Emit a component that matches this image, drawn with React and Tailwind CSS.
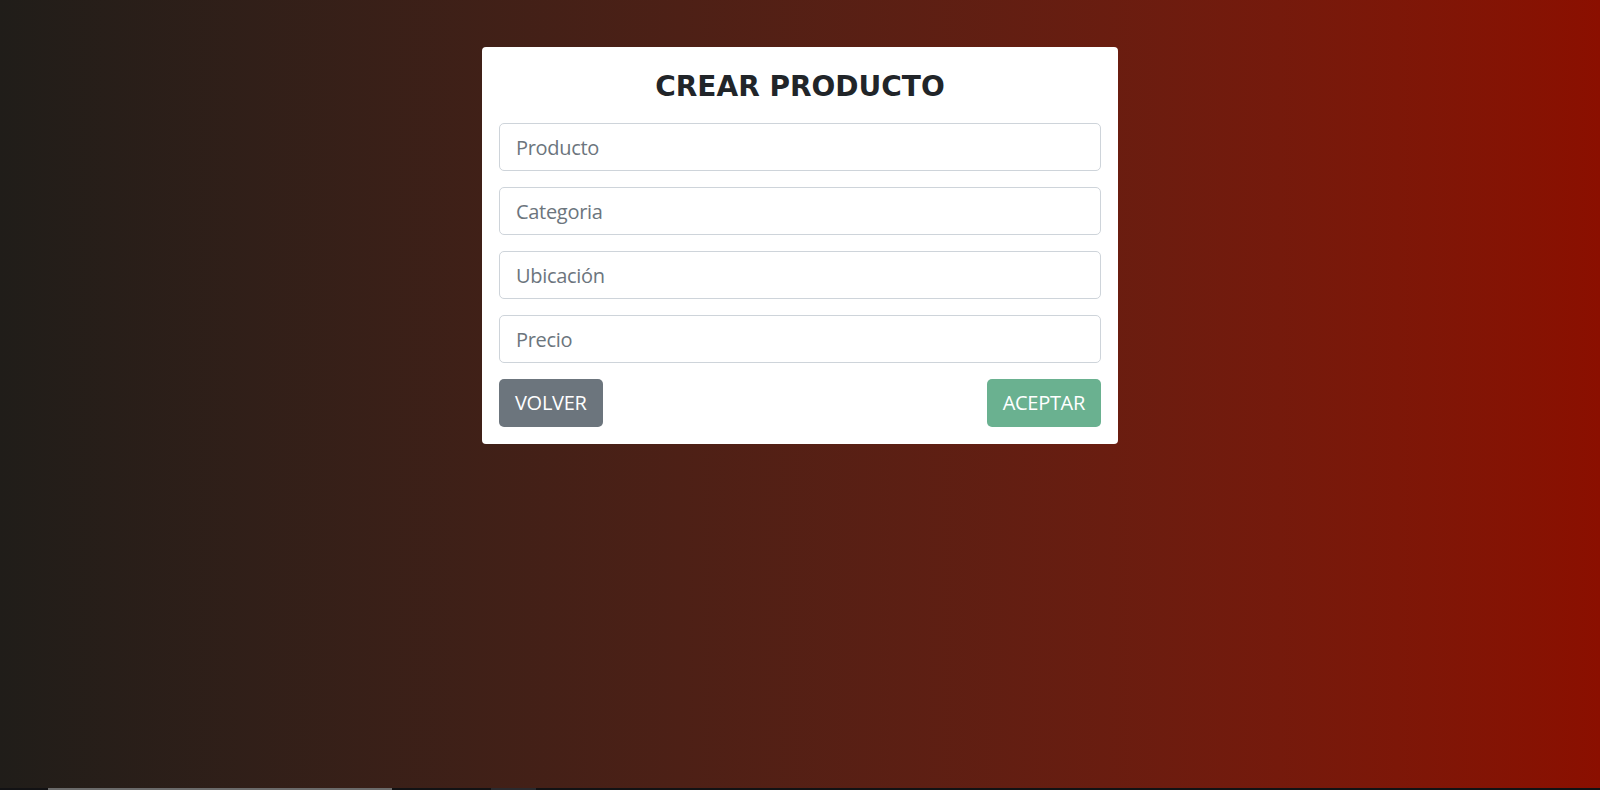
export default function App() {
  const fields = ["Producto", "Categoria", "Ubicación", "Precio"];
  return (
    <div className="w-full h-[790px] flex flex-col overflow-hidden" style={{ fontFamily: '"Open Sans", "Noto Sans", sans-serif' }}>
      <div className="flex-1 bg-gradient-to-r from-[#201d19] to-[#8b0f00] pt-[47px]">
        <div className="w-[636px] mx-auto bg-white rounded-[4px] px-[17px] pt-[18px] pb-[17px]">
          <h2
            className="h-[44px] leading-[44px] text-center text-[28px] font-bold text-[#212529] mb-[14px]"
            style={{ fontFamily: '"DejaVu Sans", sans-serif' }}
          >
            CREAR PRODUCTO
          </h2>
          <div className="flex flex-col gap-4">
            {fields.map((f) => (
              <input
                key={f}
                type="text"
                placeholder={f}
                className="w-full h-[48px] px-4 text-[20px] leading-[30px] tracking-[-0.3px] text-[#212529] placeholder:text-[#6c757d] border border-[#ced4da] rounded-[5px] outline-none bg-white"
              />
            ))}
            <div className="flex justify-between">
              <button className="h-[48px] px-4 text-[20px] tracking-[-0.3px] text-white bg-[#6c757d] rounded-[5px]">VOLVER</button>
              <button className="h-[48px] px-4 text-[20px] tracking-[-0.3px] text-white bg-[#6ab190] rounded-[5px]">ACEPTAR</button>
            </div>
          </div>
        </div>
      </div>
      <div className="h-[2px] bg-[#121214] flex">
        <div className="ml-[48px] w-[344px] bg-[#6b6b6b]" />
        <div className="ml-[99px] w-[45px] bg-[#2a2a2e]" />
      </div>
    </div>
  );
}
